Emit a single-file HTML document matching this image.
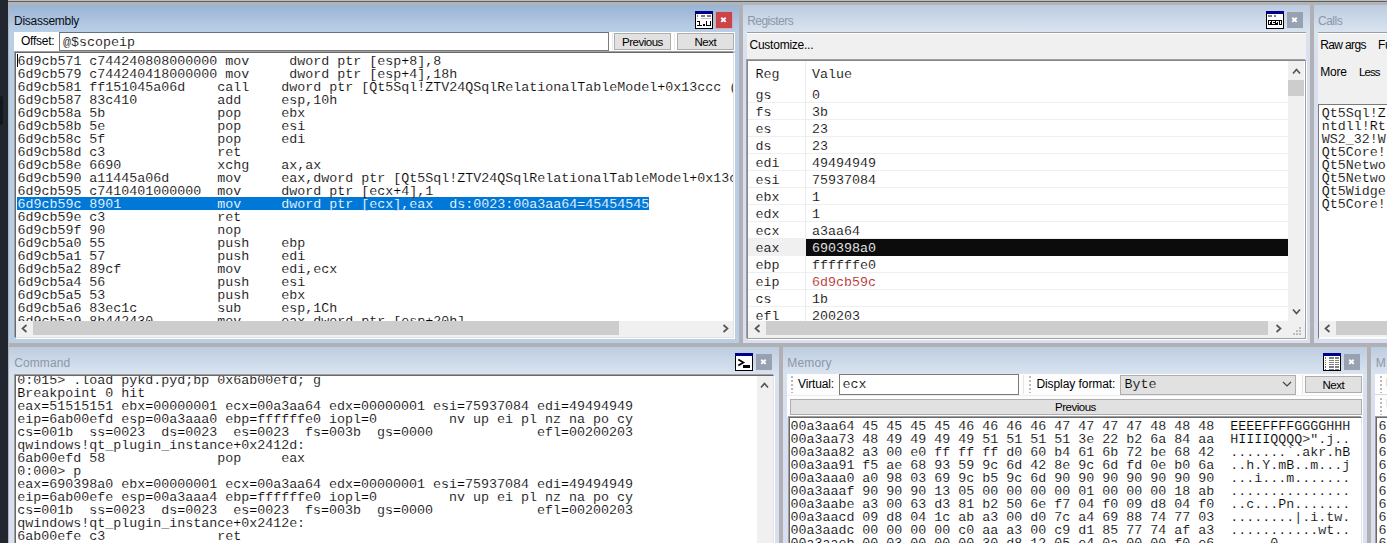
<!DOCTYPE html>
<html>
<head>
<meta charset="utf-8">
<title>WinDbg</title>
<style>
html,body{margin:0;padding:0;}
body{width:1387px;height:543px;overflow:hidden;position:relative;background:#c5d6ec;font-family:"Liberation Sans",sans-serif;font-size:12px;color:#000;}
.abs{position:absolute;}
.mono{font-family:"Liberation Mono",monospace;font-size:13.33px;line-height:13px;white-space:pre;letter-spacing:0;-webkit-text-stroke:0.15px #fff;}
.ui{font-family:"Liberation Sans",sans-serif;font-size:12px;white-space:pre;line-height:14px;}
.pane{position:absolute;overflow:hidden;}
.btn{position:absolute;background:#e1e1e1;border:1px solid #adadad;box-sizing:border-box;}
.txt{position:absolute;background:#fff;overflow:hidden;box-sizing:border-box;border:1px solid;border-color:#696969 #e3e3e3 #e3e3e3 #696969;box-shadow:-1px -1px 0 0 #a0a0a0,1px 1px 0 0 #fff;}
.txt pre{margin:0;position:absolute;}
.sb{position:absolute;background:#f0f0f0;}
.thumb{position:absolute;background:#cdcdcd;}
.sep{position:absolute;background:#b1b0b4;}
.row{position:absolute;left:0;height:17px;border-bottom:1px solid #efefef;box-sizing:border-box;}
.grip{position:absolute;width:2px;background:repeating-linear-gradient(#b9b9b9 0 2px,rgba(255,255,255,0) 2px 4px);}
</style>
</head>
<body>

<div class="abs" style="left:7px;top:0;width:3px;height:543px;background:#b0b3ba;"></div>
<div class="abs" style="left:7px;top:0;width:1380px;height:1px;background:#bdbdbd;"></div>
<div class="abs" style="left:7px;top:1px;width:1380px;height:1px;background:#5f5f5f;"></div>
<div class="abs" style="left:7px;top:2px;width:1380px;height:3px;background:#b2b5b7;"></div>
<div class="pane" style="left:9px;top:5px;width:730px;height:338px;background:linear-gradient(#98b4d6 0px,#a6bedb 10px,#b3c9e4 20px,#b9cfe6 27px,#b8cde6 60px,#b8cde6 100%);"></div>
<div class="ui abs" style="left:14px;top:14px;font-size:12px;letter-spacing:-0.27px;color:#0a0d14;">Disassembly</div>
<svg class="abs" style="left:695px;top:11px;" width="18" height="18" viewBox="0 0 18 18" shape-rendering="crispEdges"><rect x="0" y="0" width="18" height="18" fill="#000"/><rect x="1" y="3" width="16" height="14" fill="#fff"/><rect x="0" y="0" width="18" height="3" fill="#00008b"/><rect x="2" y="4" width="1" height="2" fill="#808080"/><rect x="6" y="4" width="4" height="2" fill="#808080"/><rect x="12" y="4" width="4" height="2" fill="#808080"/><rect x="2" y="7" width="1" height="1" fill="#c8c8c8"/><rect x="6" y="7" width="10" height="1" fill="#c0c0c0"/><rect x="2" y="10" width="3" height="1" fill="#000"/><rect x="4" y="10" width="1" height="5" fill="#000"/><rect x="2" y="14" width="5" height="1" fill="#000"/><rect x="8" y="13" width="2" height="2" fill="#000"/><rect x="11" y="10" width="1" height="5" fill="#000"/><rect x="15" y="10" width="1" height="5" fill="#000"/><rect x="11" y="14" width="5" height="1" fill="#000"/></svg>
<div class="abs" style="left:716px;top:12px;width:16px;height:15.7px;background:#cb4449;box-shadow:0 0 0 1px rgba(226,150,160,0.55);"></div><svg class="abs" style="left:716px;top:12px;" width="16" height="16" viewBox="0 0 16 16"><path d="M5.2 5.7 L9.7 9.9 M9.7 5.7 L5.2 9.9" stroke="#fff" stroke-width="1.9" fill="none"/></svg>
<div class="abs" style="left:14px;top:32px;width:721px;height:19px;background:#fff;"></div>
<div class="ui abs" style="left:21px;top:34px;font-size:12px;letter-spacing:-0.24px;color:#000;">Offset:</div>
<div class="abs" style="left:59px;top:32px;width:550px;height:19px;background:#fff;border:1px solid #7a7a7a;border-top-color:#66717f;box-sizing:border-box;"></div>
<div class="mono abs" style="left:63px;top:36px;color:#000;">@$scopeip</div>
<div class="abs" style="left:612px;top:33px;width:1px;height:17px;background:#e8e8e8;"></div>
<div class="abs" style="left:674px;top:33px;width:1px;height:17px;background:#e8e8e8;"></div>
<div class="btn" style="left:614px;top:33px;width:57px;height:17px;"></div>
<div class="ui abs" style="left:622px;top:35px;font-size:11.5px;letter-spacing:-0.49px;color:#000;">Previous</div>
<div class="btn" style="left:677px;top:33px;width:57px;height:17px;"></div>
<div class="ui abs" style="left:694.5px;top:35px;font-size:11.5px;letter-spacing:-0.47px;color:#000;">Next</div>
<div class="txt" style="left:15px;top:52px;width:719px;height:286px;">
<div class="abs" style="left:1px;top:143.6px;width:632px;height:13px;background:#0078d7;"></div>
<pre class="mono" style="left:1.4px;top:1.6px;">6d9cb571 c744240808000000 mov     dword ptr [esp+8],8
6d9cb579 c744240418000000 mov     dword ptr [esp+4],18h
6d9cb581 ff151045a06d    call    dword ptr [Qt5Sql!ZTV24QSqlRelationalTableModel+0x13ccc (
6d9cb587 83c410          add     esp,10h
6d9cb58a 5b              pop     ebx
6d9cb58b 5e              pop     esi
6d9cb58c 5f              pop     edi
6d9cb58d c3              ret
6d9cb58e 6690            xchg    ax,ax
6d9cb590 a11445a06d      mov     eax,dword ptr [Qt5Sql!ZTV24QSqlRelationalTableModel+0x13cd
6d9cb595 c7410401000000  mov     dword ptr [ecx+4],1
<span style="color:#fff;-webkit-text-stroke-color:#0078d7">6d9cb59c 8901            mov     dword ptr [ecx],eax  ds:0023:00a3aa64=45454545</span>
6d9cb59e c3              ret
6d9cb59f 90              nop
6d9cb5a0 55              push    ebp
6d9cb5a1 57              push    edi
6d9cb5a2 89cf            mov     edi,ecx
6d9cb5a4 56              push    esi
6d9cb5a5 53              push    ebx
6d9cb5a6 83ec1c          sub     esp,1Ch
6d9cb5a9 8b442430        mov     eax,dword ptr [esp+20h]</pre>
<div class="abs" style="left:1px;top:1.1px;width:1px;height:13px;background:#000;"></div>
<div class="sb" style="left:0;top:268.1px;width:720px;height:15.9px;"></div>
<div class="thumb" style="left:17px;top:268.1px;width:585.5px;height:14.4px;"></div>
<svg class="abs" style="left:4px;top:270.9px;" width="9" height="9" viewBox="0 0 9 9"><path d="M6.5 1 L2.5 4.5 L6.5 8" fill="none" stroke="#555" stroke-width="1.7"/></svg>
<svg class="abs" style="left:704.5px;top:270.9px;" width="9" height="9" viewBox="0 0 9 9"><path d="M2.5 1 L6.5 4.5 L2.5 8" fill="none" stroke="#555" stroke-width="1.7"/></svg>
</div>
<div class="sep" style="left:739px;top:5px;width:4px;height:339px;"></div>
<div class="sep" style="left:1310px;top:5px;width:4px;height:339px;"></div>
<div class="sep" style="left:9px;top:343px;width:1378px;height:4px;"></div>
<div class="pane" style="left:743px;top:5px;width:567px;height:338px;background:linear-gradient(#bccbde 0px,#c7d5e6 10px,#d2deed 20px,#dae3ef 27px,#d8dff0 60px,#d8dff0 100%);"></div>
<div class="ui abs" style="left:747.2px;top:14px;font-size:12px;letter-spacing:-0.53px;color:#8d97a6;">Registers</div>
<svg class="abs" style="left:1266px;top:11px;" width="18" height="18" viewBox="0 0 18 18" shape-rendering="crispEdges"><rect x="0" y="0" width="18" height="18" fill="#000"/><rect x="1" y="3" width="16" height="14" fill="#fff"/><rect x="0" y="0" width="18" height="3" fill="#00008b"/><rect x="2" y="4" width="4" height="2" fill="#808080"/><rect x="8" y="4" width="2" height="2" fill="#808080"/><rect x="2" y="9" width="14" height="5" fill="#000"/><rect x="3" y="10" width="2" height="1" fill="#fff"/><rect x="3" y="10" width="1" height="3" fill="#fff"/><rect x="6" y="10" width="3" height="1" fill="#fff"/><rect x="6" y="12" width="3" height="1" fill="#fff"/><rect x="6" y="11" width="1" height="1" fill="#fff"/><rect x="10" y="10" width="3" height="2" fill="#fff"/><rect x="11" y="11" width="1" height="1" fill="#000"/><rect x="12" y="12" width="1" height="2" fill="#fff"/><rect x="14" y="10" width="1" height="3" fill="#fff"/></svg>
<div class="abs" style="left:1287px;top:12px;width:16px;height:15.7px;background:#97a1b1;"></div><svg class="abs" style="left:1287px;top:12px;" width="16" height="16" viewBox="0 0 16 16"><path d="M5.2 5.7 L9.7 9.9 M9.7 5.7 L5.2 9.9" stroke="#fff" stroke-width="1.9" fill="none"/></svg>
<div class="abs" style="left:747px;top:32px;width:559px;height:28px;background:#f0f0f0;border-top:1px solid #9a9ea6;box-sizing:border-box;"></div>
<div class="abs" style="left:747px;top:33px;width:559px;height:1px;background:#fff;"></div>
<div class="ui abs" style="left:749.5px;top:38px;font-size:12px;letter-spacing:-0.24px;color:#000;">Customize...</div>
<div class="txt" style="left:747px;top:60px;width:559px;height:279px;border-top:1px solid #828790;border-left:1px solid #828790;border-right:1px solid #a0a0a0;border-bottom:1px solid #a0a0a0;">
  <div class="abs" style="left:56.5px;top:0;width:1px;height:260px;background:#ececec;"></div>
  <div class="row" style="top:0px;width:540px;height:25px;border-bottom:none;"><div class="mono abs" style="left:7.5px;top:7px;color:#000;">Reg</div><div class="mono abs" style="left:64px;top:7px;color:#000;">Value</div></div>
  <div class="row" style="top:25px;width:540px;height:17px;"><div class="mono abs" style="left:7.5px;top:3px;color:#000;">gs</div><div class="mono abs" style="left:64px;top:3px;color:#000;">0</div></div>
  <div class="row" style="top:42px;width:540px;height:17px;"><div class="mono abs" style="left:7.5px;top:3px;color:#000;">fs</div><div class="mono abs" style="left:64px;top:3px;color:#000;">3b</div></div>
  <div class="row" style="top:59px;width:540px;height:17px;"><div class="mono abs" style="left:7.5px;top:3px;color:#000;">es</div><div class="mono abs" style="left:64px;top:3px;color:#000;">23</div></div>
  <div class="row" style="top:76px;width:540px;height:17px;"><div class="mono abs" style="left:7.5px;top:3px;color:#000;">ds</div><div class="mono abs" style="left:64px;top:3px;color:#000;">23</div></div>
  <div class="row" style="top:93px;width:540px;height:17px;"><div class="mono abs" style="left:7.5px;top:3px;color:#000;">edi</div><div class="mono abs" style="left:64px;top:3px;color:#000;">49494949</div></div>
  <div class="row" style="top:110px;width:540px;height:17px;"><div class="mono abs" style="left:7.5px;top:3px;color:#000;">esi</div><div class="mono abs" style="left:64px;top:3px;color:#000;">75937084</div></div>
  <div class="row" style="top:127px;width:540px;height:17px;"><div class="mono abs" style="left:7.5px;top:3px;color:#000;">ebx</div><div class="mono abs" style="left:64px;top:3px;color:#000;">1</div></div>
  <div class="row" style="top:144px;width:540px;height:17px;"><div class="mono abs" style="left:7.5px;top:3px;color:#000;">edx</div><div class="mono abs" style="left:64px;top:3px;color:#000;">1</div></div>
  <div class="row" style="top:161px;width:540px;height:17px;"><div class="mono abs" style="left:7.5px;top:3px;color:#000;">ecx</div><div class="mono abs" style="left:64px;top:3px;color:#000;">a3aa64</div></div>
  <div class="row" style="top:178px;width:540px;height:17px;"><div class="abs" style="left:0;top:0;width:57px;height:17px;background:#f0f0f0;"></div><div class="abs" style="left:57.5px;top:0;width:483px;height:17px;background:#0c0c0c;"></div><div class="mono abs" style="left:7.5px;top:3px;color:#000;-webkit-text-stroke-color:#f0f0f0;">eax</div><div class="mono abs" style="left:64px;top:3px;color:#fff;-webkit-text-stroke-color:#0c0c0c;">690398a0</div></div>
  <div class="row" style="top:195px;width:540px;height:17px;"><div class="mono abs" style="left:7.5px;top:3px;color:#000;">ebp</div><div class="mono abs" style="left:64px;top:3px;color:#000;">ffffffe0</div></div>
  <div class="row" style="top:212px;width:540px;height:17px;"><div class="mono abs" style="left:7.5px;top:3px;color:#000;">eip</div><div class="mono abs" style="left:64px;top:3px;color:#b01818;">6d9cb59c</div></div>
  <div class="row" style="top:229px;width:540px;height:17px;"><div class="mono abs" style="left:7.5px;top:3px;color:#000;">cs</div><div class="mono abs" style="left:64px;top:3px;color:#000;">1b</div></div>
  <div class="row" style="top:246px;width:540px;height:17px;"><div class="mono abs" style="left:7.5px;top:3px;color:#000;">efl</div><div class="mono abs" style="left:64px;top:3px;color:#000;">200203</div></div>
  <div class="sb" style="left:540px;top:0;width:16px;height:260px;"></div>
  <div class="thumb" style="left:540px;top:18.5px;width:15.5px;height:16.5px;"></div>
  <svg class="abs" style="left:543.5px;top:6px;" width="9" height="9" viewBox="0 0 9 9"><path d="M1 6.5 L4.5 2.5 L8 6.5" fill="none" stroke="#555" stroke-width="1.7"/></svg>
  <svg class="abs" style="left:543.5px;top:246px;" width="9" height="9" viewBox="0 0 9 9"><path d="M1 2.5 L4.5 6.5 L8 2.5" fill="none" stroke="#555" stroke-width="1.7"/></svg>
  <div class="sb" style="left:0;top:260px;width:557px;height:17px;"></div>
  <div class="thumb" style="left:18px;top:260.3px;width:502px;height:14.2px;"></div>
  <svg class="abs" style="left:4.8px;top:263px;" width="9" height="9" viewBox="0 0 9 9"><path d="M6.5 1 L2.5 4.5 L6.5 8" fill="none" stroke="#555" stroke-width="1.7"/></svg>
  <svg class="abs" style="left:526px;top:262.7px;" width="9" height="9" viewBox="0 0 9 9"><path d="M2.5 1 L6.5 4.5 L2.5 8" fill="none" stroke="#555" stroke-width="1.7"/></svg>
  <svg class="abs" style="left:544px;top:265px;" width="10" height="10" viewBox="0 0 10 10"><g fill="#bcbcbc"><rect x="7" y="1" width="2" height="2"/><rect x="4" y="4" width="2" height="2"/><rect x="7" y="4" width="2" height="2"/><rect x="1" y="7" width="2" height="2"/><rect x="4" y="7" width="2" height="2"/><rect x="7" y="7" width="2" height="2"/></g></svg>
</div>
<div class="pane" style="left:1314px;top:5px;width:74px;height:338px;background:linear-gradient(#bccbde 0px,#c7d5e6 10px,#d2deed 20px,#dae3ef 27px,#d8dff0 60px,#d8dff0 100%);"></div>
<div class="ui abs" style="left:1318px;top:14px;font-size:12px;letter-spacing:-0.5px;color:#8d97a6;">Calls</div>
<div class="abs" style="left:1318px;top:32px;width:70px;height:72px;background:#f0f0f0;border-top:1px solid #9a9ea6;box-sizing:border-box;"></div>
<div class="abs" style="left:1318px;top:33px;width:70px;height:1px;background:#fff;"></div>
<div class="ui abs" style="left:1320.2px;top:38px;font-size:12px;letter-spacing:-0.62px;color:#000;">Raw args</div>
<div class="ui abs" style="left:1378px;top:38px;font-size:12px;letter-spacing:-0.3px;color:#000;">Fu</div>
<div class="ui abs" style="left:1320.2px;top:65px;font-size:12px;letter-spacing:-0.2px;color:#000;">More</div>
<div class="ui abs" style="left:1359px;top:65px;font-size:11.5px;letter-spacing:-0.9px;color:#000;">Less</div>
<div class="txt" style="left:1318px;top:104px;width:80px;height:234.5px;box-shadow:none;border-color:#7a7a7a #e3e3e3 #f6f6f6 #7a7a7a;">
<pre class="mono" style="left:2.7px;top:2.2px;">Qt5Sql!Z
ntdll!Rt
WS2_32!W
Qt5Core!
Qt5Netwo
Qt5Netwo
Qt5Widge
Qt5Core!</pre>
<div class="sb" style="left:0;top:215.7px;width:80px;height:16px;"></div>
<div class="thumb" style="left:17px;top:215.7px;width:80px;height:14.6px;"></div>
<svg class="abs" style="left:4px;top:218.6px;" width="9" height="9" viewBox="0 0 9 9"><path d="M6.5 1 L2.5 4.5 L6.5 8" fill="none" stroke="#555" stroke-width="1.7"/></svg>
</div>
<div class="pane" style="left:9px;top:347px;width:770px;height:196px;background:linear-gradient(#bccbde 0px,#c7d5e6 10px,#d2deed 20px,#dae3ef 27px,#d8dff0 60px,#d8dff0 100%);"></div>
<div class="ui abs" style="left:14.2px;top:355.7px;font-size:12px;letter-spacing:0.1px;color:#8d97a6;">Command</div>
<svg class="abs" style="left:735px;top:353px;" width="18" height="18" viewBox="0 0 18 18" shape-rendering="crispEdges"><rect x="0" y="0" width="18" height="18" fill="#000"/><rect x="1" y="3" width="16" height="14" fill="#fff"/><rect x="0" y="0" width="18" height="3" fill="#00008b"/><path d="M3.3 6.6 L8.4 9.5 L3.3 12.4" fill="none" stroke="#000" stroke-width="1.7" shape-rendering="auto"/><rect x="8" y="12.4" width="7" height="2.5" fill="#000"/></svg>
<div class="abs" style="left:756px;top:354px;width:16px;height:15.7px;background:#97a1b1;"></div><svg class="abs" style="left:756px;top:354px;" width="16" height="16" viewBox="0 0 16 16"><path d="M5.2 5.7 L9.7 9.9 M9.7 5.7 L5.2 9.9" stroke="#fff" stroke-width="1.9" fill="none"/></svg>
<div class="txt" style="left:15px;top:375px;width:758.5px;height:178px;">
<pre class="mono" style="left:1.2px;top:-2.2px;">0:015&gt; .load pykd.pyd;bp 0x6ab00efd; g
Breakpoint 0 hit
eax=51515151 ebx=00000001 ecx=00a3aa64 edx=00000001 esi=75937084 edi=49494949
eip=6ab00efd esp=00a3aaa0 ebp=ffffffe0 iopl=0         nv up ei pl nz na po cy
cs=001b  ss=0023  ds=0023  es=0023  fs=003b  gs=0000             efl=00200203
qwindows!qt_plugin_instance+0x2412d:
6ab00efd 58              pop     eax
0:000&gt; p
eax=690398a0 ebx=00000001 ecx=00a3aa64 edx=00000001 esi=75937084 edi=49494949
eip=6ab00efe esp=00a3aaa4 ebp=ffffffe0 iopl=0         nv up ei pl nz na po cy
cs=001b  ss=0023  ds=0023  es=0023  fs=003b  gs=0000             efl=00200203
qwindows!qt_plugin_instance+0x2412e:
6ab00efe c3              ret</pre>
<div class="sb" style="left:741.3px;top:0;width:15.4px;height:180px;"></div>
<svg class="abs" style="left:744.1px;top:4.7px;" width="9" height="9" viewBox="0 0 9 9"><path d="M1 6.5 L4.5 2.5 L8 6.5" fill="none" stroke="#555" stroke-width="1.7"/></svg>
</div>
<div class="sep" style="left:779px;top:347px;width:4px;height:196px;"></div>
<div class="pane" style="left:783px;top:347px;width:584px;height:196px;background:linear-gradient(#bccbde 0px,#c7d5e6 10px,#d2deed 20px,#dae3ef 27px,#d8dff0 60px,#d8dff0 100%);"></div>
<div class="ui abs" style="left:787.2px;top:355.7px;font-size:12px;letter-spacing:0.2px;color:#8d97a6;">Memory</div>
<svg class="abs" style="left:1323px;top:353px;" width="18" height="18" viewBox="0 0 18 18" shape-rendering="crispEdges"><rect x="0" y="0" width="18" height="18" fill="#000"/><rect x="1" y="3" width="16" height="14" fill="#fff"/><rect x="0" y="0" width="18" height="3" fill="#00008b"/><rect x="2" y="4" width="1" height="2" fill="#707070"/><rect x="6" y="4" width="5" height="2" fill="#808080"/><rect x="12" y="4" width="4" height="2" fill="#808080"/><rect x="2" y="7" width="1" height="1" fill="#707070"/><rect x="6" y="7" width="5" height="1" fill="#808080"/><rect x="12" y="7" width="4" height="1" fill="#808080"/><rect x="2" y="9" width="1" height="1" fill="#707070"/><rect x="6" y="9" width="5" height="1" fill="#808080"/><rect x="12" y="9" width="4" height="1" fill="#808080"/><rect x="2" y="11" width="1" height="1" fill="#707070"/><rect x="6" y="11" width="5" height="1" fill="#808080"/><rect x="12" y="11" width="4" height="1" fill="#808080"/><rect x="2" y="13" width="1" height="2" fill="#707070"/><rect x="6" y="13" width="5" height="2" fill="#808080"/><rect x="12" y="13" width="4" height="2" fill="#808080"/><rect x="2" y="16" width="1" height="1" fill="#707070"/><rect x="6" y="16" width="5" height="1" fill="#808080"/><rect x="12" y="16" width="4" height="1" fill="#808080"/></svg>
<div class="abs" style="left:1344.1px;top:354px;width:16px;height:15.7px;background:#97a1b1;"></div><svg class="abs" style="left:1344.1px;top:354px;" width="16" height="16" viewBox="0 0 16 16"><path d="M5.2 5.7 L9.7 9.9 M9.7 5.7 L5.2 9.9" stroke="#fff" stroke-width="1.9" fill="none"/></svg>
<div class="abs" style="left:787px;top:374px;width:576px;height:43px;background:#fdfdfd;"></div>
<div class="abs" style="left:787px;top:394.7px;width:576px;height:1px;background:#ececec;"></div>
<div class="abs" style="left:1023px;top:375px;width:1px;height:19px;background:#e4e4e4;"></div>
<div class="abs" style="left:1302px;top:375px;width:1px;height:19px;background:#e4e4e4;"></div>
<div class="grip" style="left:791px;top:376px;height:17px;"></div>
<div class="ui abs" style="left:798px;top:377px;font-size:12px;letter-spacing:-0.15px;color:#000;">Virtual:</div>
<div class="abs" style="left:839px;top:374px;width:180px;height:20.5px;background:#fff;border:1px solid #7a7a7a;box-sizing:border-box;"></div>
<div class="mono abs" style="left:842.5px;top:378px;color:#000;">ecx</div>
<div class="grip" style="left:1029px;top:376px;height:17px;"></div>
<div class="ui abs" style="left:1036.4px;top:377px;font-size:12px;letter-spacing:-0.07px;color:#000;">Display format:</div>
<div class="abs" style="left:1120px;top:374.5px;width:175.5px;height:20px;background:#e1e1e1;border:1px solid #adadad;box-sizing:border-box;"></div>
<div class="mono abs" style="left:1124.5px;top:378px;color:#000;-webkit-text-stroke-color:#e1e1e1;">Byte</div>
<svg class="abs" style="left:1282px;top:381px;" width="10" height="7" viewBox="0 0 10 7"><path d="M1 1 L5 5 L9 1" fill="none" stroke="#444" stroke-width="1.2"/></svg>
<div class="btn" style="left:1305px;top:376px;width:57px;height:17px;"></div>
<div class="ui abs" style="left:1322.5px;top:378px;font-size:11.5px;letter-spacing:-0.47px;color:#000;">Next</div>
<div class="btn" style="left:790px;top:398.5px;width:572px;height:16px;"></div>
<div class="ui abs" style="left:1055px;top:399.5px;font-size:11.5px;letter-spacing:-0.49px;color:#000;">Previous</div>
<div class="txt" style="left:789px;top:417px;width:573px;height:138px;">
<pre class="mono" style="left:0.4px;top:2px;">00a3aa64 45 45 45 45 46 46 46 46 47 47 47 47 48 48 48  EEEEFFFFGGGGHHH
00a3aa73 48 49 49 49 49 51 51 51 51 3e 22 b2 6a 84 aa  HIIIIQQQQ&gt;".j..
00a3aa82 a3 00 e0 ff ff ff d0 60 b4 61 6b 72 be 68 42  .......`.akr.hB
00a3aa91 f5 ae 68 93 59 9c 6d 42 8e 9c 6d fd 0e b0 6a  ..h.Y.mB..m...j
00a3aaa0 a0 98 03 69 9c b5 9c 6d 90 90 90 90 90 90 90  ...i...m.......
00a3aaaf 90 90 90 13 05 00 00 00 00 01 00 00 00 18 ab  ...............
00a3aabe a3 00 63 d3 81 b2 50 6e f7 04 f0 09 d8 04 f0  ..c...Pn.......
00a3aacd 09 d8 04 1c ab a3 00 d0 7c a4 69 88 74 77 03  ........|.i.tw.
00a3aadc 00 00 00 00 c0 aa a3 00 c9 d1 85 77 74 af a3  ...........wt..
00a3aaeb 00 03 00 00 00 30 d8 12 05 e4 0a 00 00 f0 e6  .....0.........</pre>
</div>
<div class="sep" style="left:1367px;top:347px;width:4px;height:196px;"></div>
<div class="pane" style="left:1371px;top:347px;width:16px;height:196px;background:linear-gradient(#bccbde 0px,#c7d5e6 10px,#d2deed 20px,#dae3ef 27px,#d8dff0 60px,#d8dff0 100%);"></div>
<div class="ui abs" style="left:1375.7px;top:355.7px;font-size:12px;letter-spacing:2px;color:#8d97a6;">Memory</div>
<div class="abs" style="left:1375px;top:374px;width:12px;height:43px;background:#fdfdfd;"></div>
<div class="abs" style="left:1375px;top:393.5px;width:12px;height:1px;background:#d9d9d9;"></div>
<div class="abs" style="left:1386px;top:378px;width:1px;height:8px;background:#f6d9b0;"></div>
<div class="abs" style="left:1386px;top:399px;width:1px;height:8px;background:#f8e3cf;"></div>
<div class="grip" style="left:1380px;top:376px;height:17px;"></div>
<div class="grip" style="left:1380px;top:398px;height:17px;"></div>
<div class="txt" style="left:1376px;top:417px;width:28px;height:138px;">
<pre class="mono" style="left:1.6px;top:2px;">6
6
6
6
6
6
6
6
6
6</pre>
</div>
<div class="abs" style="left:0;top:0;width:7.6px;height:543px;background:#22262f;"></div>
<div class="abs" style="left:-4px;top:95.5px;width:6.5px;height:29px;border-radius:3px;background:#14171c;"></div>
</body>
</html>
